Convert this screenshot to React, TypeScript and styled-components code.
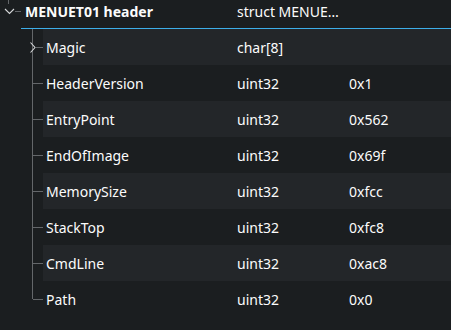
import styled, { createGlobalStyle } from "styled-components";

const GlobalStyle = createGlobalStyle`
  html, body {
    margin: 0;
    padding: 0;
    background: #1b1e20;
  }
  body {
    font-family: "Noto Sans", "DejaVu Sans", sans-serif;
    font-size: 14px;
    color: #fcfcfc;
    overflow: hidden;
  }
`;

const lineColor = "#64676a";
const arrowColor = "#d6d8da";

interface Field {
  name: string;
  type: string;
  value: string;
  expandable?: boolean;
}

const fields: Field[] = [
  { name: "Magic", type: "char[8]", value: "", expandable: true },
  { name: "HeaderVersion", type: "uint32", value: "0x1" },
  { name: "EntryPoint", type: "uint32", value: "0x562" },
  { name: "EndOfImage", type: "uint32", value: "0x69f" },
  { name: "MemorySize", type: "uint32", value: "0xfcc" },
  { name: "StackTop", type: "uint32", value: "0xfc8" },
  { name: "CmdLine", type: "uint32", value: "0xac8" },
  { name: "Path", type: "uint32", value: "0x0" },
];

const Tree = styled.div`
  width: 451px;
  height: 330px;
  background: #1b1e20;
  display: flex;
  flex-direction: column;
`;

const Row = styled.div<{ height: number }>`
  display: flex;
  height: ${({ height }) => height}px;
  flex-shrink: 0;
`;

const Gutter = styled.svg`
  flex-shrink: 0;
  display: block;
`;

const Cells = styled.div<{ gutter: number; alt?: boolean; current?: boolean }>`
  flex: 1;
  display: grid;
  grid-template-columns: ${({ gutter }) => 234 - gutter}px 112px 1fr;
  align-items: center;
  background: ${({ alt }) => (alt ? "#232629" : "transparent")};
  border-bottom: ${({ current }) => (current ? "1px solid #3daee9" : "none")};
  padding-bottom: ${({ current }) => (current ? "4px" : "0")};
  padding-top: ${({ current }) => (current ? "0" : "1px")};
`;

const Cell = styled.div<{ bold?: boolean; pad?: number }>`
  padding-left: ${({ pad }) => pad ?? 3}px;
  font-weight: ${({ bold }) => (bold ? 700 : 400)};
  white-space: nowrap;
  overflow: hidden;
  line-height: 18px;
`;

const HeaderGutter = () => (
  <Gutter width={21} height={29} shapeRendering="crispEdges">
    <line x1={8.5} y1={0} x2={8.5} y2={4} stroke={lineColor} />
    <line x1={15} y1={11.5} x2={21} y2={11.5} stroke={lineColor} />
    <polyline
      points="5,9 9.5,13.5 14,9"
      fill="none"
      stroke={arrowColor}
      strokeWidth={1.1}
      shapeRendering="geometricPrecision"
    />
  </Gutter>
);

const ChildGutter = ({ last, expandable }: { last: boolean; expandable?: boolean }) => (
  <Gutter width={43} height={36} shapeRendering="crispEdges">
    <line x1={32.5} y1={0} x2={32.5} y2={last ? 18 : 36} stroke={lineColor} />
    <line x1={expandable ? 36 : 33} y1={18.5} x2={43} y2={18.5} stroke={lineColor} />
    {expandable && (
      <polyline
        points="30.5,13.5 35,18.5 30.5,23.5"
        fill="none"
        stroke={arrowColor}
        strokeWidth={1.1}
        shapeRendering="geometricPrecision"
      />
    )}
  </Gutter>
);

export default function App() {
  return (
    <>
      <GlobalStyle />
      <Tree>
        <Row height={29}>
          <HeaderGutter />
          <Cells gutter={21} current>
            <Cell bold pad={4}>MENUET01 header</Cell>
            <Cell>struct MENUE…</Cell>
            <Cell />
          </Cells>
        </Row>
        {fields.map((f, i) => (
          <Row key={f.name} height={36}>
            <ChildGutter last={i === fields.length - 1} expandable={f.expandable} />
            <Cells gutter={43} alt={i % 2 === 0}>
              <Cell>{f.name}</Cell>
              <Cell>{f.type}</Cell>
              <Cell>{f.value}</Cell>
            </Cells>
          </Row>
        ))}
      </Tree>
    </>
  );
}
